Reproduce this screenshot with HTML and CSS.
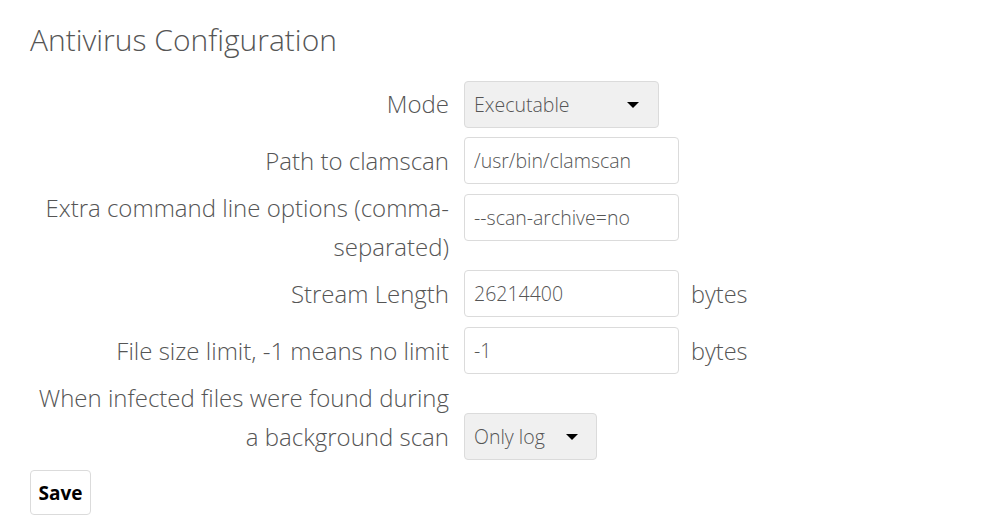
FILE: index.html
```html
<!DOCTYPE html>
<html>
<head>
<meta charset="utf-8">
<link rel="stylesheet" href="styles.css">
</head>
<body>
<div class="section">
  <h2 class="title">Antivirus Configuration</h2>
  <form class="form">
    <div class="row row-mode">
      <label class="label">Mode</label>
      <div class="select sel-mode"><span class="sel-text">Executable</span><span class="caret"></span></div>
    </div>
    <div class="row row-path">
      <label class="label">Path to clamscan</label>
      <div class="input">/usr/bin/clamscan</div>
    </div>
    <div class="row row-extra">
      <label class="label">Extra command line options (comma-separated)</label>
      <div class="input">--scan-archive=no</div>
    </div>
    <div class="row row-stream">
      <label class="label">Stream Length</label>
      <div class="input">26214400</div>
      <span class="unit">bytes</span>
    </div>
    <div class="row row-size">
      <label class="label">File size limit, -1 means no limit</label>
      <div class="input">-1</div>
      <span class="unit">bytes</span>
    </div>
    <div class="row row-infected">
      <label class="label">When infected files were found during a background scan</label>
      <div class="select sel-log"><span class="sel-text">Only log</span><span class="caret"></span></div>
    </div>
    <div class="actions">
      <button type="button" class="btn">Save</button>
    </div>
  </form>
</div>
</body>
</html>
```
FILE: styles.css
```css
html, body {
  margin: 0;
  padding: 0;
  background: #fff;
}
body {
  font-family: "Open Sans", "Noto Sans", sans-serif;
  color: #555;
}
.section {
  padding: 0 30px;
}
.title {
  margin: 0;
  padding-top: 19px;
  font-size: 30px;
  font-weight: 300;
  line-height: 41px;
  color: #555;
}
.form {
  display: flex;
  flex-direction: column;
  margin-top: 21px;
}
.row {
  display: flex;
  align-items: center;
}
.label {
  width: 419px;
  margin-right: 15px;
  text-align: right;
  font-size: 24px;
  font-weight: 300;
  line-height: 39px;
  color: #555;
}
.row-mode .label { margin-top: -3px; }
.input, .select {
  box-sizing: border-box;
  height: 47px;
  border: 1px solid #dbdbdb;
  border-radius: 4px;
  background: #fff;
  font-size: 19.5px;
  font-weight: 300;
  color: #555;
  padding: 0 9px;
  display: flex;
  align-items: center;
}
.input {
  width: 215px;
}
.select {
  background: #f0f0f0;
  justify-content: space-between;
  padding-right: 19px;
}
.sel-mode { width: 195px; }
.sel-log { width: 133px; padding-right: 18px; }
.caret {
  width: 0;
  height: 0;
  border-left: 6px solid transparent;
  border-right: 6px solid transparent;
  border-top: 6px solid #000;
}
.unit {
  margin-left: 12px;
  font-size: 23.5px;
  font-weight: 300;
  color: #555;
}
.row-path { margin-top: 9px; }
.row-extra { margin-top: 4px; align-items: flex-start; }
.row-extra .input { margin-top: 6px; }
.row-stream { margin-top: 4px; }
.row-size { margin-top: 10px; }
.row-infected { margin-top: 4px; align-items: flex-end; }
.row-infected .label { margin-bottom: 4px; }
.actions {
  margin-top: 10px;
}
.btn {
  box-sizing: border-box;
  width: 61px;
  height: 45px;
  border: 1px solid #dbdbdb;
  border-radius: 4px;
  background: #fff;
  font-family: "Open Sans", "Noto Sans", sans-serif;
  font-size: 19px;
  font-weight: 700;
  color: #000;
  padding: 0;
}
```
